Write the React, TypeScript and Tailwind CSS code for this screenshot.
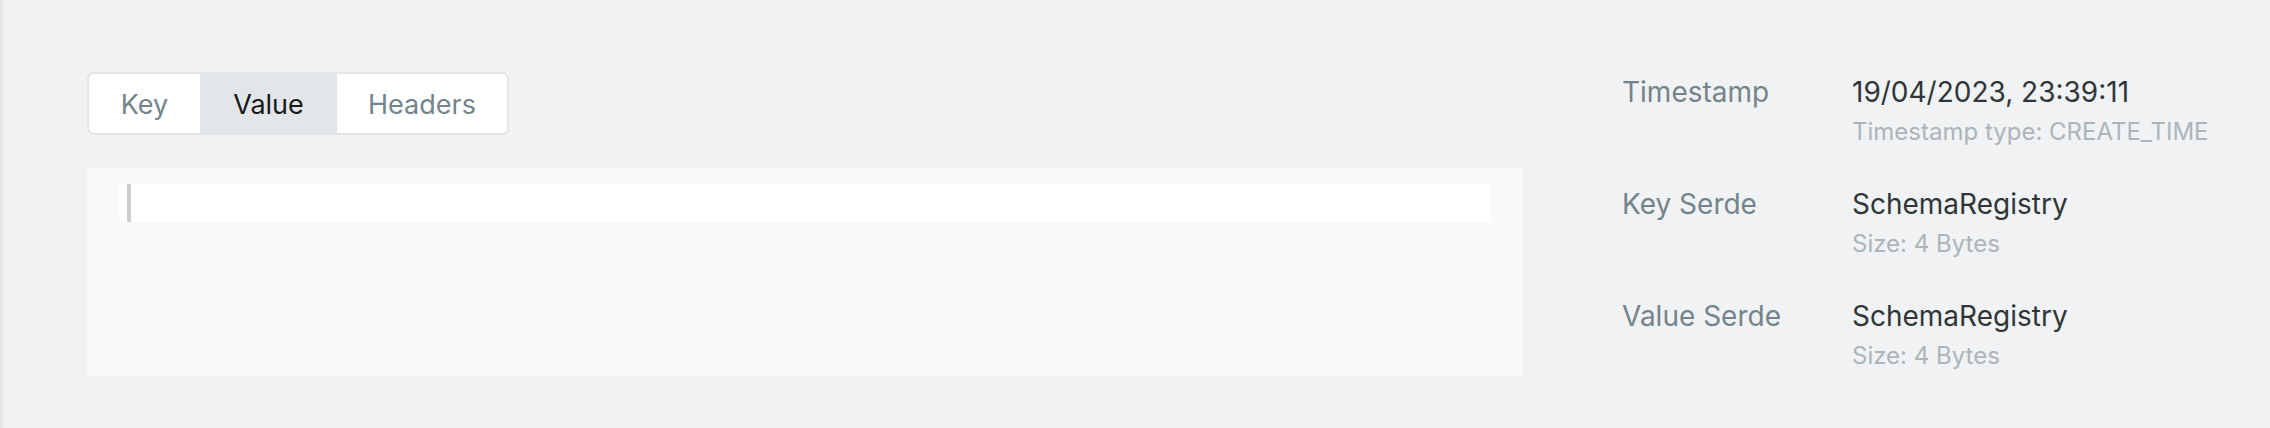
import React from 'react'

const tabs = [
  { name: 'Key', w: 'w-[111px]' },
  { name: 'Value', w: 'w-[137px]' },
  { name: 'Headers', w: 'w-[170px]' },
]

const meta = [
  { label: 'Timestamp', value: '19/04/2023, 23:39:11', sub: 'Timestamp type: CREATE_TIME' },
  { label: 'Key Serde', value: 'SchemaRegistry', sub: 'Size: 4 Bytes' },
  { label: 'Value Serde', value: 'SchemaRegistry', sub: 'Size: 4 Bytes' },
]

export default function App() {
  return (
    <div className="flex h-[428px] w-full border-l-[3px] border-[#e4e6e8] bg-[#f1f2f3] font-['Inter',sans-serif]">
      <div className="w-[1520px] shrink-0 pl-[84px] pt-[72px]">
        <div className="inline-flex h-[63px] overflow-hidden rounded-[7px] border-2 border-[#e3e6e8] bg-white text-[27px]">
          {tabs.map((t) => (
            <button
              key={t.name}
              className={
                t.name === 'Value'
                  ? `flex items-center justify-center bg-[#e3e6e8] pt-[3px] text-[#171a1c] ${t.w}`
                  : `flex items-center justify-center pt-[3px] text-[#73848c] ${t.w}`
              }
            >
              {t.name}
            </button>
          ))}
        </div>

        <div className="mt-[33px] h-[208px] w-[1436px] bg-[#f8f9f9] px-[32px] pt-[16px]">
          <div className="flex h-[38px] bg-white pl-[8px]">
            <div className="w-[4px] bg-[#cccccc]" />
          </div>
        </div>
      </div>

      <div className="ml-[99px] flex flex-col gap-[33px] pt-[71px]">
        {meta.map((m) => (
          <div key={m.label} className="flex">
            <div className="w-[230px] text-[28px] leading-[42px] text-[#73848c]">{m.label}</div>
            <div>
              <div className="text-[28px] leading-[42px] text-[#2f3639]">{m.value}</div>
              <div className="mt-[1px] text-[24px] leading-[36px] text-[#abb5ba]">{m.sub}</div>
            </div>
          </div>
        ))}
      </div>
    </div>
  )
}
